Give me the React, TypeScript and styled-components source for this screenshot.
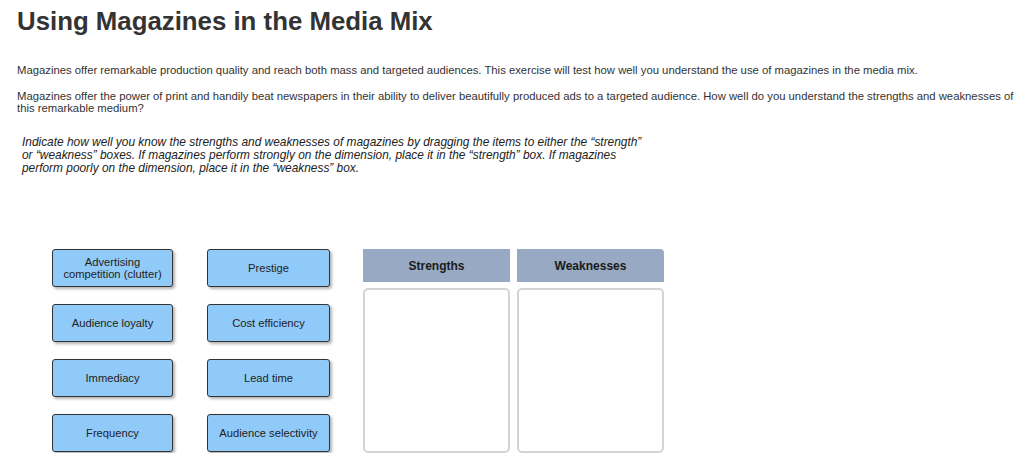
import React from 'react';
import styled, { createGlobalStyle } from 'styled-components';

const GlobalStyle = createGlobalStyle`
  body {
    margin: 0;
    background: #fff;
    font-family: "Liberation Sans", Arial, sans-serif;
    color: #333;
  }
`;

const Page = styled.div`
  padding: 7px 4px 0 17px;
`;

const Title = styled.h1`
  margin: 0;
  font-size: 25.8px;
  font-weight: bold;
  color: #333;
  line-height: 28px;
`;

const Para = styled.p<{ $top: number }>`
  margin: 0;
  font-size: 11.3px;
  line-height: 12px;
  color: #333;
  margin-top: ${(p) => p.$top}px;
`;

const Instructions = styled.p`
  margin: 22px 0 0 5px;
  width: 630px;
  font-size: 11.9px;
  line-height: 13px;
  font-style: italic;
  color: #222;
`;

const Workspace = styled.div`
  display: flex;
  align-items: flex-start;
  gap: 33px;
  margin: 74px 0 0 35px;
`;

const ItemGrid = styled.div`
  display: grid;
  grid-template-columns: 121px 123px;
  column-gap: 34px;
  row-gap: 17px;
`;

const Item = styled.div`
  box-sizing: border-box;
  height: 38px;
  background: #90caf9;
  border: 1px solid #333;
  border-radius: 3px;
  box-shadow: 2px 2px 3px rgba(0, 0, 0, 0.3);
  display: flex;
  align-items: center;
  justify-content: center;
  text-align: center;
  font-size: 11.2px;
  line-height: 12px;
  color: #222;
  padding: 0 4px;
`;

const Buckets = styled.div`
  display: grid;
  grid-template-columns: 147px 147px;
  column-gap: 7px;
  row-gap: 6px;
`;

const BucketHead = styled.div<{ $last?: boolean }>`
  height: 33px;
  background: #98aac3;
  display: flex;
  align-items: center;
  justify-content: center;
  font-size: 12px;
  font-weight: bold;
  color: #1a1a1a;
  border-top-right-radius: ${(p) => (p.$last ? '4px' : '0')};
`;

const BucketBody = styled.div`
  box-sizing: border-box;
  height: 165px;
  border: 2px solid #d4d4d4;
  border-radius: 5px;
  background: #fff;
`;

const items = [
  'Advertising competition (clutter)',
  'Prestige',
  'Audience loyalty',
  'Cost efficiency',
  'Immediacy',
  'Lead time',
  'Frequency',
  'Audience selectivity',
];

export default function App() {
  return (
    <Page>
      <GlobalStyle />
      <Title>Using Magazines in the Media Mix</Title>
      <Para $top={29}>
        Magazines offer remarkable production quality and reach both mass and targeted audiences. This exercise will test how well you understand the use of magazines in the media mix.
      </Para>
      <Para $top={14}>
        Magazines offer the power of print and handily beat newspapers in their ability to deliver beautifully produced ads to a targeted audience. How well do you understand the strengths and weaknesses of this remarkable medium?
      </Para>
      <Instructions>
        Indicate how well you know the strengths and weaknesses of magazines by dragging the items to either the “strength” or “weakness” boxes. If magazines perform strongly on the dimension, place it in the “strength” box. If magazines perform poorly on the dimension, place it in the “weakness” box.
      </Instructions>
      <Workspace>
        <ItemGrid>
          {items.map((label) => (
            <Item key={label}>{label}</Item>
          ))}
        </ItemGrid>
        <Buckets>
          <BucketHead>Strengths</BucketHead>
          <BucketHead $last>Weaknesses</BucketHead>
          <BucketBody />
          <BucketBody />
        </Buckets>
      </Workspace>
    </Page>
  );
}
